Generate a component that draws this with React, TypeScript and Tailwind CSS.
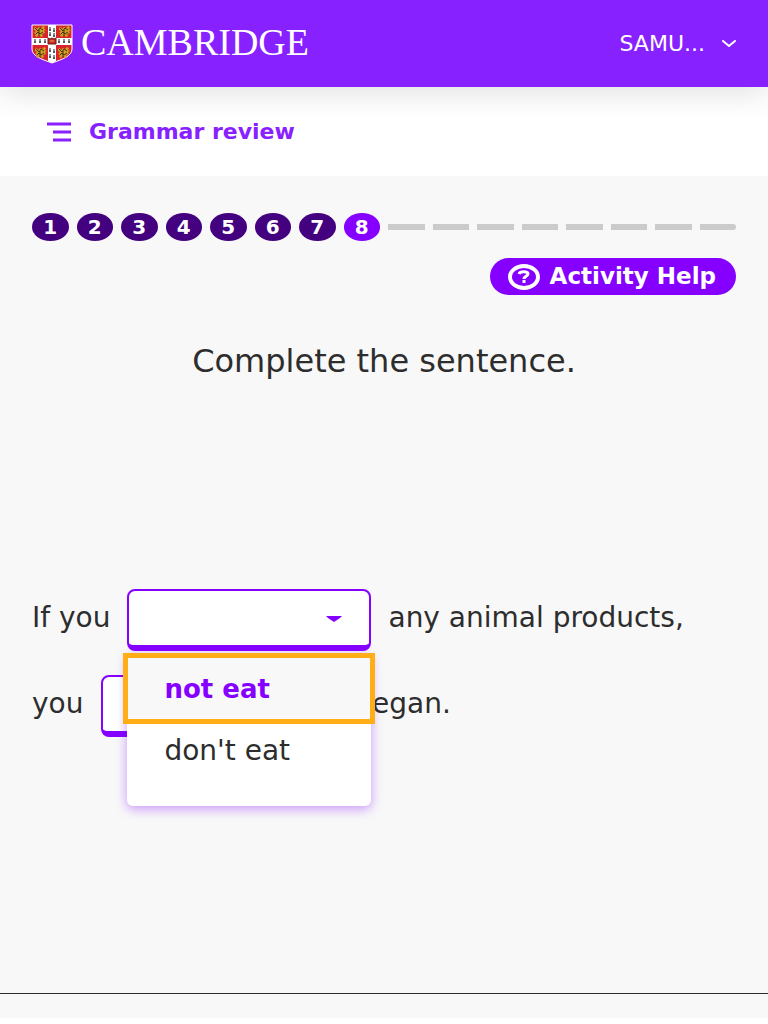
import { useState } from "react";

const TOTAL_STEPS = 16;
const CURRENT_STEP = 8;
const OPTIONS = ["not eat", "don't eat"];

function Lion({ x, y }: { x: number; y: number }) {
  return (
    <g transform={`translate(${x} ${y})`}>
      <path
        d="M2 3l2-1 1 2 2-2 2 1 2-2 2 1-1 2 2 1-2 1 1 2-3 1 1 2-2 1-2-2-2 2-2-1 1-2-2-1 2-2-2-1z"
        fill="#c9a21f"
      />
      <path d="M3 3l3 3 2-3 3 2M4 9l2-2 2 2 3-2M7 5v6" fill="none" stroke="#4b2a12" strokeWidth="1" />
    </g>
  );
}

function Ermine({ x, y }: { x: number; y: number }) {
  return <path d={`M${x} ${y}v4m-1-1h2`} stroke="#222" strokeWidth="1" />;
}

function Shield() {
  return (
    <svg width="42" height="40" viewBox="0 0 42 40" aria-hidden="true">
      <path d="M1 1h40v24c0 7-9 10-20 14C10 35 1 32 1 25z" fill="#d8242b" stroke="#fff" strokeWidth="1" />
      <path d="M17 1h8v36l-4 2-4-2z" fill="#fff" />
      <path d="M1 14h40v7H1z" fill="#fff" />
      <Lion x={1} y={1} />
      <Lion x={26} y={1} />
      <Lion x={2} y={22} />
      <Lion x={25} y={22} />
      {[4, 9, 14, 28, 33, 38].map((x) => (
        <Ermine key={x} x={x} y={15} />
      ))}
      {[3, 8, 24, 30].map((y) => (
        <g key={y}>
          <Ermine x={19} y={y} />
          <Ermine x={23} y={y + 1} />
        </g>
      ))}
      <path d="M17 14l2 1 2-1 2 1 2-1v6h-8z" fill="#c9252b" stroke="#6b1a12" strokeWidth="1" />
      <path d="M19 17h4" stroke="#d9b52c" strokeWidth="1" />
    </svg>
  );
}

function Header() {
  return (
    <header className="relative flex h-[87px] items-center justify-between bg-[#8821ff] px-[31px] text-white shadow-[0_6px_30px_rgba(0,0,0,0.12)]">
      <a href="#home" className="flex items-center gap-2">
        <Shield />
        <span className="pb-1 font-['Liberation_Serif',serif] text-[38px] leading-10">CAMBRIDGE</span>
      </a>
      <button className="flex items-center gap-4 text-[22px]">
        SAMU...
        <svg width="16" height="10" viewBox="0 0 16 10" aria-hidden="true">
          <path d="M2 2l6 5 6-5" fill="none" stroke="white" strokeWidth="2" strokeLinecap="round" />
        </svg>
      </button>
    </header>
  );
}

function Progress() {
  return (
    <ol className="flex items-center gap-2">
      {Array.from({ length: TOTAL_STEPS }, (_, i) => i + 1).map((step) => (
        <li key={step} className="flex h-7 flex-1 items-center">
          {step <= CURRENT_STEP ? (
            <button
              className={`h-7 w-full rounded-[50%] text-xl leading-7 font-bold text-white ${
                step === CURRENT_STEP ? "bg-[#8500ff]" : "bg-[#43007f]"
              }`}
            >
              {step}
            </button>
          ) : (
            <span
              className={`h-[6px] w-full bg-[#cbcbcb] ${step === TOTAL_STEPS ? "rounded-r-full" : ""}`}
            />
          )}
        </li>
      ))}
    </ol>
  );
}

function Gap({ label, value, onChange }: { label: string; value: string; onChange: (v: string) => void }) {
  return (
    <span className="relative inline-block">
      <select
        aria-label={label}
        value={value}
        onChange={(e) => onChange(e.target.value)}
        className="block h-[62px] w-[244px] appearance-none rounded-lg border-2 border-b-[6px] border-[#8500ff] bg-white px-9 outline-none"
      >
        <option value=""></option>
        {OPTIONS.map((o) => (
          <option key={o}>{o}</option>
        ))}
      </select>
      <svg
        className="pointer-events-none absolute top-[27px] right-[29px]"
        width="16"
        height="7"
        viewBox="0 0 16 7"
        aria-hidden="true"
      >
        <path d="M0 0h16l-2 2-6 4-6-4z" fill="#8500ff" />
      </svg>
    </span>
  );
}

export default function App() {
  const [first, setFirst] = useState("");
  const [second, setSecond] = useState("");
  const [open, setOpen] = useState(true);

  const pick = (option: string) => {
    setFirst(option);
    setOpen(false);
  };

  return (
    <div className="flex min-h-screen flex-col bg-white pb-[6px] font-['DejaVu_Sans',sans-serif] text-[#2d2d2d]">
      <Header />

      {/* Unit title */}
      <nav className="flex h-[89px] items-center px-[47px]">
        <button className="flex items-center gap-[18px] text-[22px] font-bold text-[#8821ff]">
          <svg width="24" height="20" viewBox="0 0 24 20" aria-hidden="true">
            <path d="M0 2h24M6 10h18M6 18h18" stroke="currentColor" strokeWidth="3" />
          </svg>
          Grammar review
        </button>
      </nav>

      <main className="flex flex-1 flex-col bg-[#f8f8f8]">
        <div className="flex-1 px-8 pt-[37px]">
          <Progress />
          <div className="mt-[17px] flex justify-end">
            <button className="flex h-[37px] items-center gap-[10px] rounded-full bg-[#8500ff] pr-5 pl-[18px] text-[23px] font-bold text-white">
              <svg width="32" height="26" viewBox="0 0 32 26" aria-hidden="true">
                <ellipse cx="16" cy="13" rx="14" ry="11" fill="none" stroke="white" strokeWidth="4" />
                <path
                  d="M11 10c1-3 9-3 9 0 0 2-4 2-4 5M16 16v3"
                  fill="none"
                  stroke="white"
                  strokeWidth="3"
                />
              </svg>
              Activity Help
            </button>
          </div>

          <h1 className="mt-[46px] text-center text-[32px] leading-10">Complete the sentence.</h1>

          {/* Gap-fill sentence */}
          <div className="mt-[208px] text-[28px] leading-8">
            <div className="flex items-center gap-[17px]">
              <span className="pb-1">If you</span>
              <span className="relative">
                <Gap label="Gap 1" value={first} onChange={setFirst} />
                {open && (
                  <ul
                    role="listbox"
                    aria-label="Gap 1 options"
                    className="absolute top-[64px] left-0 z-10 h-[153px] w-[244px] rounded-md bg-white shadow-[0_3px_12px_rgba(133,0,255,0.4)]"
                  >
                    {OPTIONS.map((option, i) => (
                      <li key={option} role="option" aria-selected={i === 0}>
                        <button
                          onClick={() => pick(option)}
                          className={
                            i === 0
                              ? "-mx-1 flex h-[71px] w-[252px] items-center border-[5px] border-[#ffae18] bg-[#f8f8f8] px-9 text-[26px] font-bold text-[#8500ff]"
                              : "flex h-[54px] w-full items-center px-[37px]"
                          }
                        >
                          {option}
                        </button>
                      </li>
                    ))}
                  </ul>
                )}
              </span>
              <span className="pb-1">any animal products,</span>
            </div>
            <div className="mt-6 flex items-center">
              <span className="mr-[18px] pb-1">you</span>
              <Gap label="Gap 2" value={second} onChange={setSecond} />
              <span className="ml-[10px] pb-1">vegan.</span>
            </div>
          </div>
        </div>
        <footer className="h-[25px] border-t border-[#2d2d2d]" />
      </main>
    </div>
  );
}
